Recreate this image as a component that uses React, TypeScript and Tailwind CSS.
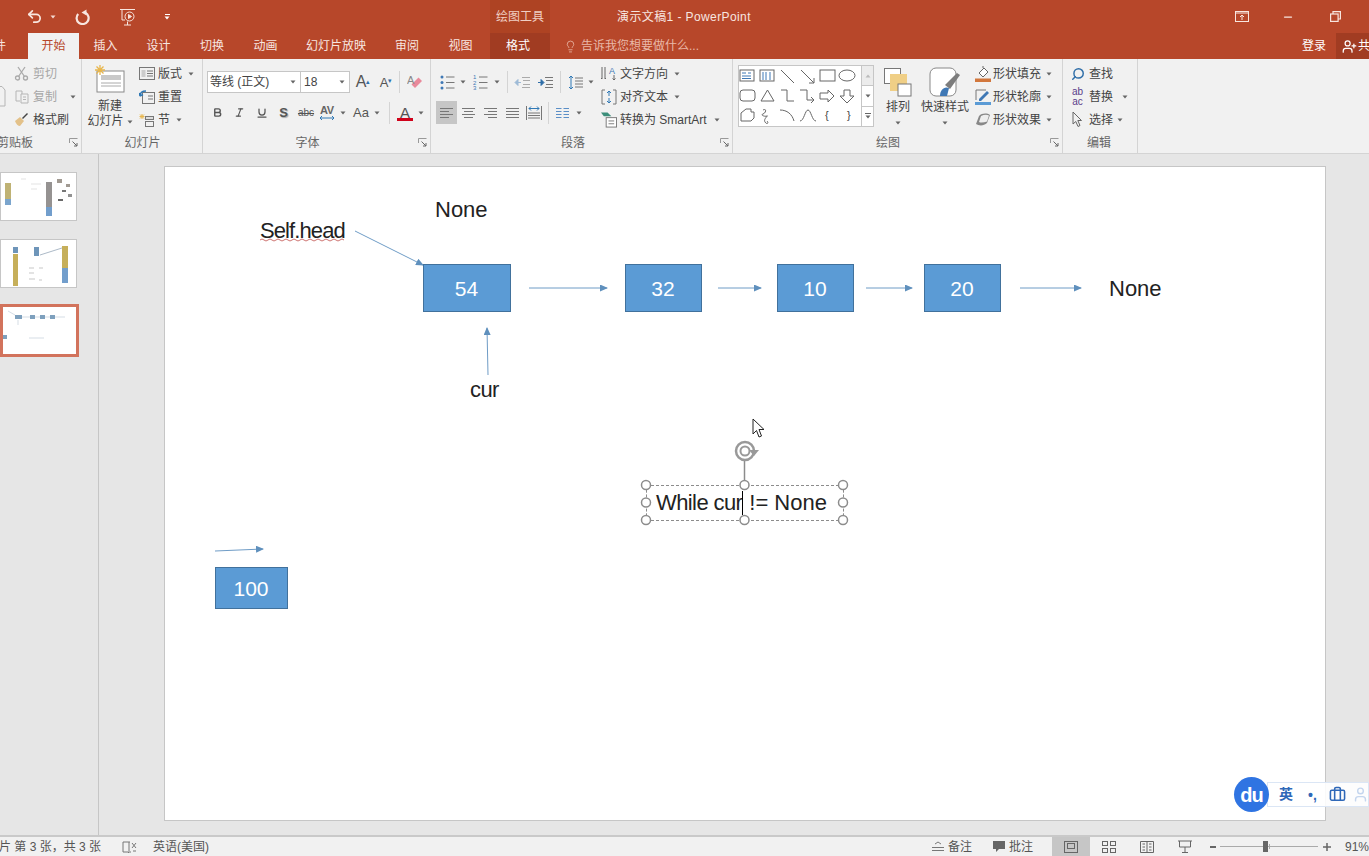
import type { ReactNode } from 'react';
import { Undo2, Minus, Search, Lightbulb, UserPlus, Bold, Italic, Underline, Briefcase, User } from 'lucide-react';

const cjk = "font-['Liberation_Sans','Noto_Sans_CJK_SC',sans-serif]";

const tabs = [
  { label: '插入', w: 'w-[53px]' },
  { label: '设计', w: 'w-[53px]' },
  { label: '切换', w: 'w-[54px]' },
  { label: '动画', w: 'w-[53px]' },
  { label: '幻灯片放映', w: 'w-[88px]' },
  { label: '审阅', w: 'w-[54px]' },
  { label: '视图', w: 'w-[53px]' },
];

function Caret({ className = 'text-[#666]' }: { className?: string }) {
  return (
    <svg width="6" height="4" viewBox="0 0 6 4" className={`shrink-0 ${className}`}>
      <path d="M0.500 0.500h5L3 3.500z" fill="currentColor" />
    </svg>
  );
}

function Launcher() {
  return (
    <svg width="9" height="9" viewBox="0 0 9 9" className="shrink-0">
      <path d="M0.500 5V0.500H8.500" fill="none" stroke="#999" />
      <path d="M3.500 3.500L8 8M8 5V8H5" fill="none" stroke="#666" />
    </svg>
  );
}

function Group({ w, label, labelClass = 'justify-center', launcher = false, children }: { w: string; label: string; labelClass?: string; launcher?: boolean; children: ReactNode }) {
  return (
    <div className={`${w} shrink-0 h-full flex flex-col border-r border-[#d4d4d4]`}>
      <div className="h-[72px] pt-[3px] flex overflow-hidden">{children}</div>
      <div className="relative flex-1 flex items-center text-[12px] text-[#666] pr-[3px] pt-[1px]">
        <div className={`flex-1 flex ${labelClass}`}>{label}</div>
        {launcher && <Launcher />}
      </div>
    </div>
  );
}

function TextRow({ icon, text, caret, gap = 'gap-[4px]', muted, iconW = 'w-[15px]', caretGap = 'ml-[5px]' }: { icon: ReactNode; text: string; caret?: boolean; gap?: string; muted?: boolean; iconW?: string; caretGap?: string }) {
  return (
    <div className={`h-[23px] flex items-center ${gap} text-[12px] ${muted ? 'text-[#a6a6a6]' : 'text-[#444]'}`}>
      <div className={`${iconW} h-[18px] flex items-center justify-center shrink-0`}>{icon}</div>
      <span className="whitespace-nowrap">{text}</span>
      {caret && <div className={caretGap}><Caret /></div>}
    </div>
  );
}

function Cell({ w, children, active }: { w: string; children: ReactNode; active?: boolean }) {
  return <div className={`${w} h-[23px] shrink-0 flex items-center justify-center ${active ? 'bg-[#c6c6c6]' : ''}`}>{children}</div>;
}

function Sep() {
  return <div className="w-px h-[22px] bg-[#d4d4d4] shrink-0" />;
}

function Lines({ kind }: { kind: 'left' | 'center' | 'right' | 'justify' | 'cols' }) {
  const rows = [2, 5, 8, 11];
  const span = (i: number) => {
    if (kind === 'left') return i % 2 ? [1, 10] : [1, 14];
    if (kind === 'center') return i % 2 ? [3, 12] : [1, 14];
    if (kind === 'right') return i % 2 ? [5, 14] : [1, 14];
    return [1, 14];
  };
  if (kind === 'cols') {
    return (
      <svg width="15" height="13" viewBox="0 0 15 13" stroke="#5b8fc7">
        {rows.map((y) => (
          <g key={y}>
            <path d={`M1 ${y + 0.5}H6.500`} />
            <path d={`M8.500 ${y + 0.5}H14`} />
          </g>
        ))}
      </svg>
    );
  }
  return (
    <svg width="15" height="13" viewBox="0 0 15 13" stroke="#777">
      {rows.map((y, i) => (
        <path key={y} d={`M${span(i)[0]} ${y + 0.5}H${span(i)[1]}`} />
      ))}
    </svg>
  );
}

function Bullets({ numbered }: { numbered?: boolean }) {
  return (
    <svg width="15" height="15" viewBox="0 0 15 15">
      {[2, 7.5, 13].map((y, i) =>
        numbered ? (
          <text key={y} x="0" y={y + 2} fontSize="6" fill="#3f78b5" fontFamily="Liberation Sans">{i + 1}</text>
        ) : (
          <circle key={y} cx="2" cy={y} r="1.500" fill="#3f78b5" />
        ),
      )}
      {[2, 7.5, 13].map((y) => (
        <path key={y} d={`M6 ${y}H14.500`} stroke="#777" />
      ))}
    </svg>
  );
}

function Indent({ more }: { more?: boolean }) {
  return (
    <svg width="17" height="13" viewBox="0 0 17 13">
      <path d="M8 1.500H16M9 4.500H16M9 8.500H16M8 11.500H16" stroke={more ? '#777' : '#aaa'} />
      <path d={more ? 'M1 6.500H5M4 3.500L7 6.500L4 9.500Z' : 'M3 6.500H7M4 3.500L1 6.500L4 9.500Z'} stroke={more ? '#2f6ea8' : '#9dbad6'} fill={more ? '#2f6ea8' : '#9dbad6'} />
    </svg>
  );
}

function Gallery() {
  return (
    <div className="w-[136px] h-[62px] border border-[#c6c6c6] bg-white flex shrink-0 mt-[3px]">
      <svg width="122" height="60" viewBox="2 1 122 60" fill="none" stroke="#666" className="shrink-0">
        <rect x="3" y="5" width="14" height="11" />
        <path d="M5 8h4M5 11h9M5 13.500h9M11 8h3" stroke="#3f78b5" />
        <rect x="23" y="5" width="14" height="11" />
        <path d="M26 7v8M29 7v8M33 7v8" stroke="#3f78b5" />
        <path d="M44 5L57 18" />
        <path d="M64 5L77 18M77 13v5h-5" />
        <rect x="83" y="5" width="15" height="11" />
        <ellipse cx="110" cy="10.500" rx="8" ry="5.500" />
        <rect x="3" y="25" width="15" height="11" rx="3" />
        <path d="M24 36L30.500 25L37 36Z" />
        <path d="M44 25h6v11h7" />
        <path d="M63 25h7v10h6M74 32l3 3-3 3" />
        <path d="M83 28h8v-3l6 6-6 6v-3h-8z" />
        <path d="M107 25h6v6h4l-7 7-7-7h4z" />
        <path d="M4 56v-8l5-4h5v3h3v6l-3 3z" />
        <path d="M26 45c4-2 3 3 0 4s2 3 4 2-4 3-2 6 4 1 2-1" />
        <path d="M43 45c7 0 12 4 14 11" />
        <path d="M63 56c4 0 5-11 8-11s4 11 8 11" />
        <text x="88" y="54" fontSize="11" fill="#444" stroke="none" fontFamily="Liberation Sans">{'{'}</text>
        <text x="110" y="54" fontSize="11" fill="#444" stroke="none" fontFamily="Liberation Sans">{'}'}</text>
      </svg>
      <div className="flex-1 flex flex-col border-l border-[#c6c6c6]">
        <div className="flex-1 bg-[#ececec] flex items-center justify-center">
          <Caret className="text-[#bbb] rotate-180" />
        </div>
        <div className="flex-1 border-y border-[#c6c6c6] flex items-center justify-center">
          <Caret />
        </div>
        <div className="flex-1 flex flex-col gap-px items-center justify-center">
          <div className="w-[6px] h-px bg-[#666]" />
          <Caret />
        </div>
      </div>
    </div>
  );
}

function TitleBar() {
  return (
    <div className="h-[33px] flex items-center text-[#f8e6df]">
      <div className="w-[490px] h-full flex items-center shrink-0">
        <Undo2 size={17} strokeWidth={2.400} className="ml-[26px]" />
        <div className="ml-[7px]"><Caret className="text-[#f3d9d0]" /></div>
        <svg width="16" height="16" viewBox="0 0 16 16" fill="none" className="ml-[19px]">
          <path d="M3.200 5A6 6 0 1 0 10.500 3.800" stroke="#f8e6df" strokeWidth="2.200" />
          <path d="M11.500 0.500V6.500L6.500 3.500z" fill="#f8e6df" />
        </svg>
        <svg width="18" height="18" viewBox="0 0 18 18" fill="none" stroke="#f8e6df" className="ml-[28px]">
          <path d="M1 1.500H16M3 1.500V12H6M5 17H12M8.500 13.500V17" />
          <circle cx="10.500" cy="8.500" r="4.500" />
          <path d="M9.500 6.500l3 2-3 2z" fill="#f8e6df" />
        </svg>
        <div className="ml-[27px] flex flex-col items-center gap-[1px]">
          <div className="w-[5px] h-px bg-white" />
          <Caret className="text-white" />
        </div>
      </div>
      <div className="w-[60px] h-full bg-[#a8411f]/60 flex items-center justify-center text-[12px] text-[#f0cfc4] shrink-0">绘图工具</div>
      <div className="ml-[67px] text-[12px] text-[#f7e6e0] tracking-[0.4px] whitespace-nowrap">演示文稿1 - PowerPoint</div>
      <div className="flex-1" />
      <svg width="14" height="11" viewBox="0 0 14 11" fill="none" stroke="#f8e6df" className="mr-[33px]">
        <rect x="0.500" y="0.500" width="13" height="10" />
        <path d="M7 9V4M5 6l2-2 2 2M0.500 2h13" />
      </svg>
      <Minus size={12} strokeWidth={2.500} className="mr-[36px]" />
      <svg width="11" height="11" viewBox="0 0 11 11" fill="none" stroke="#f8e6df" strokeWidth="1.200" className="mr-[28px]">
        <rect x="0.600" y="3" width="7.500" height="7.400" />
        <path d="M3 3V0.600H10.400V8H8" />
      </svg>
    </div>
  );
}

function TabBar() {
  return (
    <div className="h-[26px] flex items-stretch text-[12px] text-[#f7e6e0]">
      <div className="w-[28px] overflow-hidden flex justify-end items-center pr-[22px] shrink-0">
        <span className="whitespace-nowrap">文件</span>
      </div>
      <div className="w-[51px] bg-[#f1f1f1] text-[#b7472a] flex items-center justify-center shrink-0">开始</div>
      {tabs.map((t) => (
        <div key={t.label} className={`${t.w} flex items-center justify-center shrink-0`}>{t.label}</div>
      ))}
      <div className="w-[60px] ml-[3px] pr-[4px] bg-[#a13c22] text-white flex items-center justify-center shrink-0">格式</div>
      <div className="ml-[14px] flex items-center gap-[4px] text-[#e9b8a8]">
        <Lightbulb size={13} strokeWidth={1.500} />
        <span className="whitespace-nowrap">告诉我您想要做什么...</span>
      </div>
      <div className="flex-1" />
      <div className="flex items-center mr-[10px] text-white">登录</div>
      <div className="w-[33px] bg-[#a13c22] flex items-center pl-[6px] overflow-hidden text-white shrink-0 gap-[1px]">
        <UserPlus size={15} className="shrink-0" />
        <span className="whitespace-nowrap">共享</span>
      </div>
    </div>
  );
}

function Ribbon() {
  return (
    <div className={`h-[95px] bg-[#f1f1f1] border-b border-[#d4d4d4] flex ${cjk}`}>
      <Group w="w-[82px]" label="剪贴板" labelClass="justify-start -ml-[3px]" launcher>
        <div className="w-[14px] shrink-0 overflow-hidden pt-[24px]">
          <svg width="7" height="22" viewBox="0 0 7 22" fill="none" stroke="#b5b5b5">
            <path d="M0 0.500H2L5 4V20H0" />
          </svg>
        </div>
        <div className="flex flex-col">
          <TextRow muted icon={<svg width="15" height="15" viewBox="0 0 15 15" fill="none" stroke="#aaa" strokeWidth="1.300"><circle cx="3.500" cy="12" r="2" /><circle cx="11.500" cy="12" r="2" /><path d="M4.500 10.500L11 1M10.500 10.500L4 1" /></svg>} text="剪切" />
          <TextRow muted icon={<svg width="14" height="14" viewBox="0 0 14 14" fill="none" stroke="#b5b5b5"><path d="M1 1h6v3M1 1v10h4M6 4h7v9H6zM8 7h3M8 9.500h3" /></svg>} text="复制" caret caretGap="ml-[9px]" />
          <TextRow icon={<svg width="15" height="15" viewBox="0 0 15 15"><path d="M1 9l5-4 4 4-4 5c-2 0-4-2-5-5z" fill="#e3c189" /><path d="M8 6l5-5 1 1-5 5z" fill="#444" /></svg>} text="格式刷" />
        </div>
      </Group>

      <Group w="w-[121px]" label="幻灯片" labelClass="justify-center pl-[4px]">
        <div className="w-[56px] flex flex-col items-center shrink-0">
          <svg width="32" height="28" viewBox="0 0 32 28" fill="none" className="mt-[3px]">
            <rect x="3" y="6" width="27" height="21" fill="#fff" stroke="#8a8a8a" />
            <rect x="7" y="10" width="20" height="5" fill="#c9c9c9" />
            <path d="M7 18h20M7 21h20" stroke="#aaa" />
            <path d="M6 0v10M1 5h10M2.500 1.500l7 7M9.500 1.500l-7 7" stroke="#e8b64c" strokeWidth="1.300" />
          </svg>
          <div className="mt-[6px] text-[12px] leading-[15px] text-[#444] text-center whitespace-nowrap">
            <div>新建</div>
            <div className="flex items-center gap-[3px]">幻灯片<Caret /></div>
          </div>
        </div>
        <div className="flex flex-col ml-[1px]">
          <TextRow gap="gap-[3px]" icon={<svg width="16" height="13" viewBox="0 0 16 13" fill="none" stroke="#777"><rect x="0.500" y="0.500" width="15" height="12" /><rect x="2.500" y="3" width="4" height="7" fill="#ccc" stroke="none" /><path d="M8 4h6M8 6.500h6M8 9h6" /></svg>} iconW="w-[16px]" text="版式" caret caretGap="ml-[3px]" />
          <TextRow gap="gap-[3px]" icon={<svg width="16" height="14" viewBox="0 0 16 14" fill="none" stroke="#777"><rect x="3.500" y="2.500" width="12" height="11" /><path d="M9 6h5M9 9h5" /><path d="M7 1C3 1 1 3 1 6M1 6L0 3M1 6l3-1.500" stroke="#2f78b5" strokeWidth="1.500" /></svg>} iconW="w-[16px]" text="重置" />
          <TextRow gap="gap-[3px]" icon={<svg width="16" height="14" viewBox="0 0 16 14" fill="none"><path d="M3 1v5M0.500 3.500h5M1 1.500l4 4M5 1.500l-4 4" stroke="#e8b64c" /><rect x="6.500" y="3.500" width="8" height="3" fill="#ddd" stroke="#777" /><rect x="6.500" y="8.500" width="8" height="5" stroke="#777" /></svg>} iconW="w-[16px]" text="节" caret caretGap="ml-[3px]" />
        </div>
      </Group>

      <Group w="w-[228px]" label="字体" launcher labelClass="justify-center pr-[6px]">
        <div className="ml-[4px] flex flex-col">
          <div className="flex items-center h-[26px] mt-[7px]">
            <div className="w-[94px] h-[22px] bg-white border border-[#c6c6c6] flex items-center pl-[2px] pr-[4px] text-[12px] text-[#444] justify-between">
              <span className="whitespace-nowrap">等线 (正文)</span>
              <Caret />
            </div>
            <div className="w-[49px] h-[22px] bg-white border border-l-0 border-[#c6c6c6] flex items-center pl-[3px] pr-[4px] text-[12px] text-[#444] justify-between">
              <span>18</span>
              <Caret />
            </div>
            <Cell w="w-[26px]"><span className="text-[16px] leading-none text-[#555]">A<sup className="text-[7px] text-[#2f6ea8]">▴</sup></span></Cell>
            <Cell w="w-[20px]"><span className="text-[13px] leading-none text-[#555]">A<sup className="text-[7px] text-[#2f6ea8]">▾</sup></span></Cell>
            <div className="w-[3px]" />
            <Sep />
            <Cell w="w-[30px]">
              <svg width="16" height="16" viewBox="0 0 16 16"><path d="M8 14l7-7-3.500-3.500-7 7z" fill="#e98a9b" /><text x="0" y="10" fontSize="11" fill="#888" fontFamily="Liberation Sans">A</text></svg>
            </Cell>
          </div>
          <div className="flex items-center h-[23px] mt-[6px]">
            <Cell w="w-[20px]"><Bold size={11} strokeWidth={3} color="#555" /></Cell>
            <Cell w="w-[24px]"><Italic size={11} strokeWidth={2.500} color="#555" /></Cell>
            <Cell w="w-[21px]"><Underline size={12} strokeWidth={2.500} color="#555" /></Cell>
            <Cell w="w-[23px]"><span className="text-[13px] font-bold text-[#555] [text-shadow:1px_1px_1px_#aaa]">S</span></Cell>
            <Cell w="w-[22px]"><span className="text-[10px] line-through text-[#555]">abc</span></Cell>
            <Cell w="w-[20px]">
              <svg width="17" height="17" viewBox="0 0 17 17">
                <text x="1" y="10" fontSize="11" fontWeight="bold" fill="#666" fontFamily="Liberation Sans" textLength="14">AV</text>
                <path d="M1 14H15M3 12l-2 2 2 2M13 12l2 2-2 2" stroke="#2f78b5" fill="none" />
              </svg>
            </Cell>
            <Cell w="w-[12px]"><Caret /></Cell>
            <Cell w="w-[24px]"><span className="text-[13px] text-[#555]">Aa</span></Cell>
            <Cell w="w-[8px]"><Caret /></Cell>
            <div className="w-[8px]" />
            <Sep />
            <Cell w="w-[30px]">
              <div className="flex flex-col items-center leading-none text-[15px] text-[#555]">
                <span className="h-[13px]">A</span>
                <div className="w-[16px] h-[3px] bg-[#d0021b]" />
              </div>
            </Cell>
            <Cell w="w-[2px]"><Caret /></Cell>
          </div>
        </div>
      </Group>

      <Group w="w-[302px]" label="段落" launcher labelClass="justify-center pr-[5px]">
        <div className="ml-[5px] flex flex-col shrink-0">
          <div className="flex items-center h-[26px] mt-[7px]">
            <Cell w="w-[22px]"><Bullets /></Cell>
            <Cell w="w-[10px]"><Caret /></Cell>
            <Cell w="w-[24px]"><Bullets numbered /></Cell>
            <Cell w="w-[10px]"><Caret /></Cell>
            <div className="w-[5px]" />
            <Sep />
            <Cell w="w-[28px]"><Indent /></Cell>
            <Cell w="w-[18px]"><Indent more /></Cell>
            <div className="w-[6px]" />
            <Sep />
            <Cell w="w-[28px]">
              <svg width="15" height="15" viewBox="0 0 15 15" fill="none">
                <path d="M3 1v13M1 3l2-2 2 2M1 12l2 2 2-2" stroke="#2f78b5" />
                <path d="M7 3h8M7 6h8M7 9h8M7 12h8" stroke="#777" />
              </svg>
            </Cell>
            <Cell w="w-[4px]"><Caret /></Cell>
          </div>
          <div className="flex items-center h-[23px] mt-[6px]">
            <Cell w="w-[21px]" active><Lines kind="left" /></Cell>
            <Cell w="w-[22px]"><Lines kind="center" /></Cell>
            <Cell w="w-[22px]"><Lines kind="right" /></Cell>
            <Cell w="w-[22px]"><Lines kind="justify" /></Cell>
            <Cell w="w-[21px]">
              <svg width="16" height="16" viewBox="0 0 16 16" fill="none">
                <path d="M0.500 1V15M15.500 1V15" stroke="#777" />
                <path d="M3 3.500H13M5 1.500L3 3.500L5 5.500M11 1.500L13 3.500L11 5.500" stroke="#2f78b5" />
                <path d="M2 8H14M2 10.500H14M2 13H14" stroke="#777" />
              </svg>
            </Cell>
            <div className="w-[4px]" />
            <Sep />
            <Cell w="w-[27px]"><Lines kind="cols" /></Cell>
            <Cell w="w-[6px]"><Caret /></Cell>
          </div>
        </div>
        <div className="ml-[8px] flex flex-col">
          <TextRow iconW="w-[16px]" gap="gap-[3px]" icon={<svg width="16" height="16" viewBox="0 0 16 16" fill="none" stroke="#666"><path d="M1 1v12M4 1v12M13 9v5M11.500 12.500l1.500 1.500 1.500-1.500M1 13l-1-1M4 13l1-1" /><text x="8" y="8" fontSize="9" fill="#3f78b5" stroke="none" fontFamily="Liberation Sans">A</text></svg>} text="文字方向" caret caretGap="ml-[3px]" />
          <TextRow iconW="w-[16px]" gap="gap-[3px]" icon={<svg width="16" height="16" viewBox="0 0 16 16" fill="none"><path d="M4 1H1V15H4M12 1H15V15H12" stroke="#777" /><path d="M8 2v5M6 4l2-2 2 2M8 9v5M6 12l2 2 2-2" stroke="#2f78b5" /></svg>} text="对齐文本" caret caretGap="ml-[3px]" />
          <TextRow iconW="w-[16px]" gap="gap-[3px]" icon={<svg width="17" height="16" viewBox="0 0 17 16"><path d="M0 0h7l4 4H3z" fill="#3c8e7a" /><rect x="5.500" y="5.500" width="11" height="10" fill="#fff" stroke="#777" /><path d="M8 9h6M8 12h6" stroke="#777" /></svg>} text="转换为 SmartArt" caret caretGap="ml-[4px]" />
        </div>
      </Group>

      <Group w="w-[330px]" label="绘图" launcher labelClass="justify-start pl-[143px]">
        <div className="ml-[5px]"><Gallery /></div>
        <div className="ml-[9px] w-[30px] flex flex-col items-center shrink-0">
          <svg width="28" height="29" viewBox="0 0 28 29" className="mt-[6px]">
            <rect x="0.500" y="0.500" width="16" height="15" fill="#fff" stroke="#777" />
            <rect x="6" y="6" width="17" height="17" fill="#f0cf86" />
            <rect x="14" y="16" width="13" height="12" fill="#fff" stroke="#777" />
          </svg>
          <div className="mt-[3px] text-[12px] text-[#444] whitespace-nowrap leading-[15px]">排列</div>
          <div className="mt-[6px]"><Caret /></div>
        </div>
        <div className="ml-[7px] w-[50px] flex flex-col items-center shrink-0">
          <svg width="32" height="31" viewBox="0 0 32 31" className="mt-[5px]">
            <rect x="1" y="1" width="26" height="28" rx="6" fill="#fff" stroke="#888" />
            <path d="M16 18l12-12 3 2-10 14z" fill="#7d7d7d" />
            <path d="M11 29c0-6 4-10 9-8l-2 8z" fill="#3f78b5" />
          </svg>
          <div className="mt-[2px] text-[12px] text-[#444] whitespace-nowrap leading-[15px]">快速样式</div>
          <div className="mt-[6px]"><Caret /></div>
        </div>
        <div className="ml-[5px] flex flex-col">
          <TextRow iconW="w-[16px]" gap="gap-[2px]" caretGap="ml-[3px]" icon={<svg width="16" height="16" viewBox="0 0 16 16" fill="none"><path d="M4 7l5-5 4 4-5 5z" fill="#fff" stroke="#666" /><path d="M8 2V0" stroke="#666" /><rect x="0" y="12.500" width="16" height="3.500" fill="#d2773d" /></svg>} text="形状填充" caret />
          <TextRow iconW="w-[16px]" gap="gap-[2px]" caretGap="ml-[3px]" icon={<svg width="16" height="16" viewBox="0 0 16 16" fill="none"><path d="M1 11V1H11" stroke="#777" /><path d="M4 10l8-8 2 2-8 8H4z" fill="#3f78b5" /><rect x="0" y="13" width="16" height="3" fill="#5b9bd5" /></svg>} text="形状轮廓" caret />
          <TextRow iconW="w-[16px]" gap="gap-[2px]" caretGap="ml-[3px]" icon={<svg width="16" height="13" viewBox="0 0 16 13"><path d="M1 11l3-8c3-3 8-3 11-1l-3 8c-3 3-8 3-11 1z" fill="#888" /><path d="M4 9l2-6c3-1.500 6-1.500 8-.5l-2 6c-3 1-6 1.500-8 .5z" fill="#eee" /></svg>} text="形状效果" caret />
        </div>
      </Group>

      <Group w="w-[75px]" label="编辑" labelClass="justify-center pl-[1px]">
        <div className="ml-[7px] flex flex-col">
          <TextRow icon={<Search size={14} strokeWidth={2.500} color="#2f6ea8" className="-scale-x-100" />} text="查找" />
          <TextRow icon={<span className="text-[10px] leading-[10px] text-[#5a3d8a] text-center">ab<br />ac</span>} text="替换" caret caretGap="ml-[5px]" />
          <TextRow
            icon={
              <svg width="11" height="17" viewBox="0 0 11 17" fill="none" stroke="#666">
                <path d="M1 1V13L3.800 10.500L6 15.500L8 14.500L5.800 9.500H9.500z" />
              </svg>
            }
            text="选择"
            caret
            caretGap="ml-0"
          />
        </div>
      </Group>
    </div>
  );
}

function Thumb({ active, children }: { active?: boolean; children: ReactNode }) {
  return (
    <div className={`bg-white shrink-0 overflow-hidden ${active ? 'w-[79px] h-[53px] border-[3px] border-[#d2735c]' : 'w-[77px] h-[49px] border border-[#c6c6c6]'}`}>
      {children}
    </div>
  );
}

function Thumbnails() {
  return (
    <div className="w-[99px] shrink-0 border-r border-[#c6c6c6] flex flex-col pt-[18px]">
      <Thumb>
        <svg width="75" height="47" viewBox="0 0 75 47" opacity="0.8">
          <rect x="4" y="10" width="6" height="20" fill="#b0a052" />
          <rect x="4" y="26" width="6" height="6" fill="#5b8fc1" />
          <path d="M20 6h5M30 11h10M30 16h6" stroke="#ddd" />
          <rect x="45" y="9" width="6" height="25" fill="#7b7776" />
          <rect x="45" y="34" width="6" height="9" fill="#4f86c0" />
          <rect x="56" y="6" width="5" height="4" fill="#8a8278" />
          <rect x="65" y="11" width="4" height="3" fill="#8a8278" />
          <rect x="61" y="17" width="4" height="2" fill="#555" />
          <rect x="67" y="21" width="4" height="3" fill="#777" />
          <rect x="57" y="26" width="5" height="2" fill="#444" />
        </svg>
      </Thumb>
      <div className="h-[18px]" />
      <Thumb>
        <svg width="75" height="47" viewBox="0 0 75 47" opacity="0.8">
          <rect x="12" y="7" width="5" height="6" fill="#4b7ba8" />
          <rect x="12" y="14" width="5" height="32" fill="#b89c32" />
          <rect x="33" y="7" width="5" height="9" fill="#4b7ba8" />
          <path d="M39 15L61 8" stroke="#9ab" />
          <rect x="61" y="6" width="6" height="22" fill="#b89c32" />
          <rect x="61" y="28" width="6" height="15" fill="#4f86c0" />
          <path d="M28 28h5M28 33h5M38 28h4M28 39h6M38 40h3" stroke="#bbb" />
        </svg>
      </Thumb>
      <div className="h-[16px]" />
      <Thumb active>
        <svg width="73" height="47" viewBox="0 0 73 47" opacity="0.8">
          <rect x="12" y="8" width="7" height="4" fill="#5e89ad" />
          <rect x="27" y="8" width="5" height="4" fill="#5e89ad" />
          <rect x="37" y="8" width="5" height="4" fill="#5e89ad" />
          <rect x="47" y="8" width="5" height="4" fill="#5e89ad" />
          <path d="M19 10h8M32 10h5M42 10h5M52 10h10M5 4L12 8M15 13v5M26 31h15" stroke="#aabbcc" strokeWidth="0.600" />
          <rect x="0" y="28" width="4" height="4" fill="#5e89ad" />
        </svg>
      </Thumb>
    </div>
  );
}

const nodes = [
  { label: '54', cls: 'left-[258px] top-[97px] w-[88px] h-[48px]' },
  { label: '32', cls: 'left-[460px] top-[97px] w-[77px] h-[48px]' },
  { label: '10', cls: 'left-[612px] top-[97px] w-[77px] h-[48px]' },
  { label: '20', cls: 'left-[759px] top-[97px] w-[77px] h-[48px]' },
  { label: '100', cls: 'left-[50px] top-[400px] w-[73px] h-[42px]' },
];

// slide coordinates: page x - 165, page y - 166
const arrows = [
  [190, 64, 258, 98],
  [364, 121, 442, 121],
  [553, 121, 596, 121],
  [701, 121, 747, 121],
  [855, 121, 916, 121],
  [323, 208, 322, 161],
  [50, 384, 98, 382],
];

const handles = [
  [0, 0], [98.5, 0], [197, 0],
  [0, 17.5], [197, 17.5],
  [0, 35], [98.5, 35], [197, 35],
];

function Slide() {
  const slideText = "font-['Liberation_Sans',sans-serif] text-[22px] leading-none text-[#222] whitespace-nowrap";
  return (
    <div className="relative w-[1162px] h-[655px] bg-white border border-[#c6c6c6] shrink-0">
      <svg className="absolute left-0 top-0 overflow-visible" width="1160" height="653" fill="none">
        <defs>
          <marker id="head" markerWidth="8" markerHeight="7" refX="7" refY="3.500" orient="auto" markerUnits="userSpaceOnUse">
            <path d="M0 0L8 3.500L0 7z" fill="#5f90bd" />
          </marker>
        </defs>
        {arrows.map(([x1, y1, x2, y2]) => (
          <line key={`${x1}-${y1}`} x1={x1} y1={y1} x2={x2} y2={y2} stroke="#6f9cc6" strokeWidth="1" markerEnd="url(#head)" />
        ))}
        <path d="M95 73q2-2 4 0t4 0t4 0t4 0t4 0t4 0t4 0t4 0t4 0t4 0t4 0t4 0t4 0t4 0t4 0t4 0t4 0t4 0t4 0t4 0t4 0" stroke="#c0504d" strokeWidth="0.800" />
      </svg>

      {nodes.map((n) => (
        <div key={n.label} className={`absolute ${n.cls} bg-[#5b9bd5] border border-[#41719c] pr-[1px] pt-[1px] flex items-center justify-center text-[21px] text-white font-['Liberation_Sans',sans-serif]`}>
          {n.label}
        </div>
      ))}

      <div className={`absolute ${slideText} tracking-[-0.9px] left-[95px] top-[53px]`}>Self.head</div>
      <div className={`absolute ${slideText} left-[270px] top-[32px]`}>None</div>
      <div className={`absolute ${slideText} left-[944px] top-[111px]`}>None</div>
      <div className={`absolute ${slideText} tracking-[-0.6px] left-[305px] top-[212px]`}>cur</div>

      {/* selected text box */}
      <div className="absolute left-[481px] top-[318px] w-[198px] h-[36px] border border-dashed border-[#8c8c8c] flex items-center pl-[9px]">
        <span className={`${slideText} tracking-[-0.6px]`}>While cur</span>
        <span className="w-px h-[24px] bg-black shrink-0" />
        <span className={`${slideText} ml-[6px]`}>!= None</span>
      </div>
      <svg className="absolute left-[481px] top-[269px] overflow-visible" width="198" height="85" fill="none">
        <path d="M98.500 25V49" stroke="#8c8c8c" strokeWidth="1.500" />
        <circle cx="99" cy="15" r="9" stroke="#999" strokeWidth="2.500" />
        <circle cx="99" cy="15" r="4.500" stroke="#999" strokeWidth="2" />
        <path d="M103 14h10l-5 6z" fill="#999" />
        {handles.map(([x, y]) => (
          <circle key={`${x}-${y}`} cx={x} cy={y + 49} r="4.500" fill="#fff" stroke="#8c8c8c" strokeWidth="1.500" />
        ))}
      </svg>

      {/* mouse pointer */}
      <svg className="absolute left-[587px] top-[251px]" width="14" height="21" viewBox="0 0 14 21">
        <path d="M1 1V16L4.500 12.500L7 19L9.500 18L7 11.500H12z" fill="#fff" stroke="#222" strokeWidth="1" />
      </svg>
    </div>
  );
}

function ImeBar() {
  return (
    <div className="absolute left-[1234px] top-[777px] flex items-center">
      <div className="w-[35px] h-[35px] rounded-full bg-[#2f74e2] flex items-center justify-center text-white text-[20px] font-bold z-10 font-['Liberation_Sans',sans-serif] tracking-[-1px]">du</div>
      <div className="w-[102px] h-[25px] -ml-[2px] bg-white/90 border border-[#dbe6f5] flex items-center pl-[11px] text-[#2f68b8] overflow-hidden">
        <span className={`text-[14px] font-bold ${cjk}`}>英</span>
        <span className="ml-[15px] text-[14px] font-bold leading-none">•,</span>
        <Briefcase size={17} strokeWidth={2.200} className="ml-[12px] shrink-0" />
        <User size={17} className="ml-[6px] text-[#c5d6ee] shrink-0" />
      </div>
    </div>
  );
}

function StatusBar() {
  return (
    <div className={`h-[19px] bg-[#f1f1f1] flex items-center text-[12px] text-[#555] ${cjk}`}>
      <div className="w-[122px] overflow-hidden flex justify-start shrink-0">
        <span className="whitespace-nowrap -ml-[25px]">幻灯片 第 3 张，共 3 张</span>
      </div>
      <svg width="15" height="14" viewBox="0 0 15 14" fill="none" stroke="#777" className="shrink-0">
        <path d="M7 2H1V12H6l1 1V2M7 2h1M8 12h1" />
        <path d="M10 3l4 5M14 3l-4 5M11 11h3" />
      </svg>
      <span className="ml-[16px] whitespace-nowrap">英语(美国)</span>
      <div className="flex-1" />
      <svg width="12" height="11" viewBox="0 0 12 11" stroke="#777" fill="none" className="mr-[4px]">
        <path d="M0 6.500H12M0 9.500H12M3 3l3-2 3 2" />
      </svg>
      <span>备注</span>
      <svg width="12" height="11" viewBox="0 0 12 11" className="ml-[21px] mr-[4px]">
        <path d="M0 0H12V8H6L3 11V8H0z" fill="#666" />
      </svg>
      <span>批注</span>
      <div className="ml-[19px] w-[38px] h-full bg-[#c6c6c6] flex items-center justify-center">
        <svg width="14" height="12" viewBox="0 0 14 12" fill="none" stroke="#666"><rect x="0.500" y="0.500" width="13" height="11" /><rect x="3.500" y="2.500" width="7" height="5" /></svg>
      </div>
      <div className="w-[38px] flex justify-center">
        <svg width="14" height="12" viewBox="0 0 14 12" fill="none" stroke="#666"><rect x="0.500" y="0.500" width="5" height="4" /><rect x="8.500" y="0.500" width="5" height="4" /><rect x="0.500" y="7.500" width="5" height="4" /><rect x="8.500" y="7.500" width="5" height="4" /></svg>
      </div>
      <div className="w-[38px] flex justify-center">
        <svg width="14" height="12" viewBox="0 0 14 12" fill="none" stroke="#666"><path d="M0.500 0.500H13.500V11.500H0.500zM7 0.500V11.500M2.500 3h2.500M2.500 6h2.500M2.500 9h2.500M9 3h2.500M9 6h2.500M9 9h2.500" /></svg>
      </div>
      <div className="w-[38px] flex justify-center">
        <svg width="14" height="13" viewBox="0 0 14 13" fill="none" stroke="#666"><path d="M0 1H14M1.500 1V7H12.500V1M7 7V12M4 12.500H10" /></svg>
      </div>
      <div className="ml-[6px] w-[6px] h-[2px] bg-[#666] shrink-0" />
      <div className="relative w-[98px] ml-[4px] mr-[5px] h-px bg-[#aaa] shrink-0">
        <div className="absolute left-[43px] -top-[5px] w-[5px] h-[11px] bg-[#666]" />
        <div className="absolute left-[49px] -top-[2px] w-px h-[5px] bg-[#aaa]" />
      </div>
      <svg width="8" height="8" viewBox="0 0 8 8" stroke="#666" strokeWidth="1.500" className="shrink-0"><path d="M0 4H8M4 0V8" /></svg>
      <span className="ml-[14px] font-['Liberation_Sans',sans-serif] whitespace-nowrap w-[24px] shrink-0">91%</span>
    </div>
  );
}

export default function App() {
  return (
    <div className={`relative w-[1369px] h-[856px] overflow-hidden bg-[#e6e6e6] ${cjk}`}>
      <div className="bg-[#b7472a]">
        <TitleBar />
        <TabBar />
      </div>
      <Ribbon />
      <div className="h-[683px] flex border-b-2 border-[#c9c9c9]">
        <Thumbnails />
        <div className="flex-1 pl-[65px] pt-[12px]">
          <Slide />
        </div>
      </div>
      <StatusBar />
      <ImeBar />
    </div>
  );
}
